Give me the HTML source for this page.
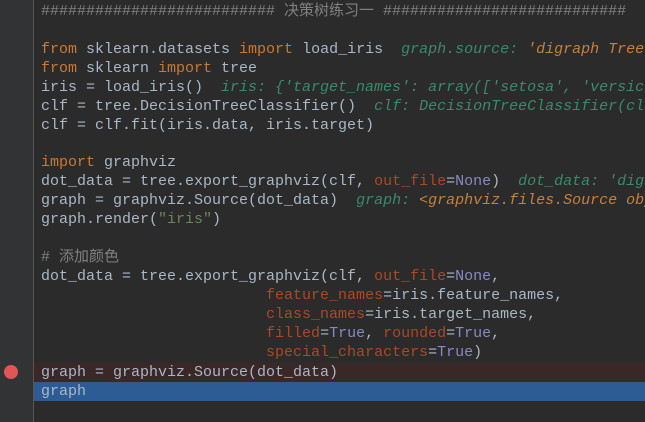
<!DOCTYPE html>
<html><head><meta charset="utf-8"><style>
html,body{margin:0;width:645px;height:422px;overflow:hidden}
body{background:#2b2b2b;position:relative;font-family:"Liberation Mono","Noto Sans CJK SC",monospace;font-size:15px;color:#a9b7c6}
.gut{position:absolute;left:0;top:0;width:33px;height:422px;background:#313335;border-right:1px solid #555}
.l{position:absolute;left:41px;right:0;overflow:hidden;white-space:pre;height:19px;line-height:19px}
.k{color:#cc7832}.c{color:#808080}.h{color:#3a8a6b;font-style:italic}.hs{color:#c7813a;font-style:italic}
.p{color:#aa4926}.n{color:#8888c6}.s{color:#6a8759}
.row{position:absolute;left:34px;width:611px;height:19px}
</style></head><body>
<div class="gut"></div>
<div class="row" style="top:363px;background:#3a2727"></div>
<div class="row" style="top:382px;background:#2d5c94"></div>
<div style="position:absolute;left:4px;top:365px;width:14px;height:14px;border-radius:50%;background:#e05555"></div>
<div class="l c" style="top:2px">########################## 决策树练习一 ###########################</div>
<div class="l" style="top:40px"><span class="k">from</span> sklearn.datasets <span class="k">import</span> load_iris  <span class="h">graph.source: </span><span class="hs">'digraph Tree {</span></div>
<div class="l" style="top:59px"><span class="k">from</span> sklearn <span class="k">import</span> tree</div>
<div class="l" style="top:78px">iris = load_iris()  <span class="h">iris: {'target_names': array(['setosa', 'versicolor'</span></div>
<div class="l" style="top:97px">clf = tree.DecisionTreeClassifier()  <span class="h">clf: DecisionTreeClassifier(class</span></div>
<div class="l" style="top:116px">clf = clf.fit(iris.data, iris.target)</div>
<div class="l" style="top:153px"><span class="k">import</span> graphviz</div>
<div class="l" style="top:172px">dot_data = tree.export_graphviz(clf, <span class="p">out_file</span>=<span class="n">None</span>)  <span class="h">dot_data: 'digraph</span></div>
<div class="l" style="top:191px">graph = graphviz.Source(dot_data)  <span class="h">graph: </span><span class="hs">&lt;graphviz.files.Source object</span></div>
<div class="l" style="top:210px">graph.render(<span class="s">"iris"</span>)</div>
<div class="l c" style="top:248px"># 添加颜色</div>
<div class="l" style="top:267px">dot_data = tree.export_graphviz(clf, <span class="p">out_file</span>=<span class="n">None</span>,</div>
<div class="l" style="top:286px">                         <span class="p">feature_names</span>=iris.feature_names,</div>
<div class="l" style="top:305px">                         <span class="p">class_names</span>=iris.target_names,</div>
<div class="l" style="top:324px">                         <span class="p">filled</span>=<span class="n">True</span>, <span class="p">rounded</span>=<span class="n">True</span>,</div>
<div class="l" style="top:343px">                         <span class="p">special_characters</span>=<span class="n">True</span>)</div>
<div class="l" style="top:363px">graph = graphviz.Source(dot_data)</div>
<div class="l" style="top:382px">graph</div>
</body></html>
